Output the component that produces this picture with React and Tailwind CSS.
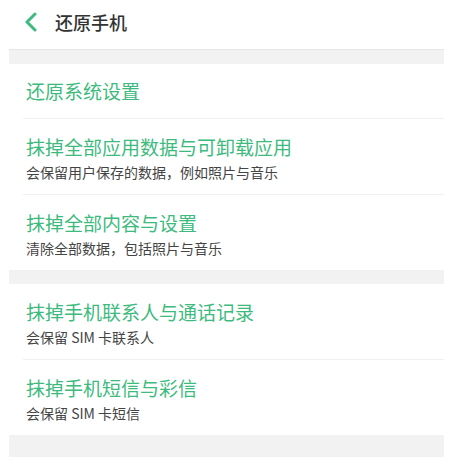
export default function App() {
  const groups = [
    [
      { title: '还原系统设置' },
      { title: '抹掉全部应用数据与可卸载应用', sub: '会保留用户保存的数据，例如照片与音乐' },
      { title: '抹掉全部内容与设置', sub: '清除全部数据，包括照片与音乐' },
    ],
    [
      { title: '抹掉手机联系人与通话记录', sub: '会保留 SIM 卡联系人' },
      { title: '抹掉手机短信与彩信', sub: '会保留 SIM 卡短信' },
    ],
  ];

  return (
    <div
      className="w-[449px] h-[462px] bg-white overflow-hidden"
      style={{ fontFamily: '"Noto Sans CJK SC", "Noto Sans", sans-serif' }}
    >
      {/* 标题栏 */}
      <div className="h-[49px] flex items-center pl-[24px] pb-[6px]">
        <svg width="14" height="20" viewBox="0 0 14 20">
          <polyline
            points="11,2 3,10 11,18"
            fill="none"
            stroke="#3dba7e"
            strokeWidth="3"
            strokeLinecap="round"
            strokeLinejoin="round"
          />
        </svg>
        <span className="ml-[17px] text-[18px] leading-[24px] font-medium text-[#333]">还原手机</span>
      </div>

      <div className="ml-[9px] mr-[5px]">
        {groups.map((items, gi) => (
          <div key={gi}>
            <div
              className={
                gi === 0
                  ? 'h-[15px] bg-[#f2f2f2] border-t border-[#e6e6e6]'
                  : 'h-[14px] bg-[#f2f2f2]'
              }
            />
            <div className="ml-[14px]">
              {items.map((it, i) => (
                <div
                  key={i}
                  className={
                    (i > 0 ? 'border-t border-[#f0f0f0] ' : '') +
                    (it.sub ? 'pt-[15px] pb-[10px] pl-[3px]' : 'py-[14px] pl-[3px]')
                  }
                >
                  <div className="text-[19px] leading-[26px] text-[#3dba7e]">{it.title}</div>
                  {it.sub && (
                    <div className="text-[14px] leading-[24px] text-[#444]">{it.sub}</div>
                  )}
                </div>
              ))}
            </div>
          </div>
        ))}
        <div className="h-[22px] bg-[#f2f2f2]" />
      </div>
    </div>
  );
}
